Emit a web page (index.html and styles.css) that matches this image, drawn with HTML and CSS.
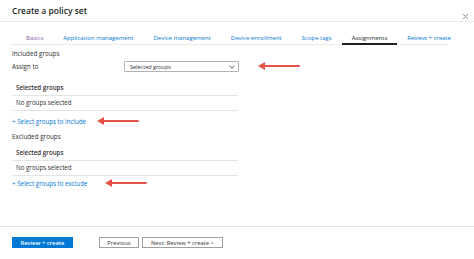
FILE: index.html
```html
<!DOCTYPE html>
<html lang="en">

<head>
    <meta charset="UTF-8">
    <meta name="viewport" content="width=device-width, initial-scale=1.0">
    <title>Create a policy set</title>
    <link rel="stylesheet" href="styles.css">
</head>

<body>

    <div class="page">
        <div class="header">
            <div class="header-title">Create a policy set</div>
            <svg class="close-icon" width="7" height="7" viewBox="0 0 7 7">
                <path d="M1 1 L6 6 M6 1 L1 6" stroke="#8a8886" stroke-width="0.9" fill="none"/>
            </svg>
        </div>

        <div class="main">
            <div class="tabs">
                <a class="tab tab-visited">Basics</a>
                <a class="tab">Application management</a>
                <a class="tab">Device management</a>
                <a class="tab">Device enrollment</a>
                <a class="tab">Scope tags</a>
                <a class="tab tab-active">Assignments</a>
                <a class="tab">Review + create</a>
            </div>

            <div class="section-label">Included groups</div>
            <div class="assign-row">
                <div class="assign-label">Assign to</div>
                <div class="dropdown">
                    <span>Selected groups</span>
                    <svg width="6" height="4" viewBox="0 0 6 4">
                        <path d="M0.5 0.8 L3 3.2 L5.5 0.8" stroke="#323130" stroke-width="0.8" fill="none"/>
                    </svg>
                </div>
            </div>

            <div class="group-table group-table-first">
                <div class="group-row group-head">Selected groups</div>
                <div class="group-row">No groups selected</div>
            </div>
            <a class="add-link add-link-first">+ Select groups to include</a>

            <div class="section-label section-label-second">Excluded groups</div>
            <div class="group-table">
                <div class="group-row group-head">Selected groups</div>
                <div class="group-row">No groups selected</div>
            </div>
            <a class="add-link add-link-second">+ Select groups to exclude</a>
        </div>

        <div class="footer">
            <button class="btn btn-primary">Review + create</button>
            <button class="btn btn-outline btn-prev">Previous</button>
            <button class="btn btn-outline">Next: Review + create &gt;</button>
        </div>

        <!-- red annotation arrows -->
        <div class="arrow arrow-assign"></div>
        <div class="arrow arrow-include"></div>
        <div class="arrow arrow-exclude"></div>
    </div>

</body>

</html>
```

FILE: styles.css
```css
* {
    margin: 0;
    padding: 0;
    box-sizing: border-box;
}

body {
    font-family: "Open Sans", "Liberation Sans", sans-serif;
    background-color: #ffffff;
    color: #323130;
}

.page {
    position: relative;
    width: 474px;
    height: 259px;
    display: flex;
    flex-direction: column;
}

.header {
    height: 22px;
    display: flex;
    justify-content: space-between;
    align-items: center;
    padding: 0 5px 1px 12px;
    border-bottom: 1px solid #e8e8e8;
}

.header-title {
    font-size: 8.5px;
    font-weight: 600;
    color: #201f1e;
}

.close-icon {
    margin-top: 12px;
}

.main {
    flex: 1;
    padding: 0 12px;
}

.tabs {
    display: flex;
    margin: 11px 14px 0 -1px;
    padding-left: 5px;
    border-bottom: 1px solid #ebebeb;
}

.tab {
    font-size: 6px;
    line-height: 10px;
    color: #0078d4;
    padding: 0 10px;
    border-bottom: 2px solid transparent;
    margin-bottom: -1px;
    white-space: nowrap;
}

.tab-visited {
    color: #8a5aa0;
}

.tab-active {
    color: #201f1e;
    border-bottom-color: #201f1e;
}

.section-label {
    font-size: 6.3px;
    line-height: 10px;
    margin-top: 4px;
}

.section-label-second {
    margin-top: 5px;
}

.assign-row {
    display: flex;
    align-items: center;
    margin-top: 2px;
    font-size: 6.3px;
}

.assign-label {
    width: 112px;
}

.dropdown {
    width: 115px;
    height: 11px;
    display: flex;
    justify-content: space-between;
    align-items: center;
    padding: 0 3px 0 5px;
    border: 1px solid #b4b4b4;
    border-radius: 1px;
    font-size: 5.5px;
}

.group-table {
    width: 226px;
    margin-top: 4px;
}

.group-table-first {
    margin-top: 9px;
}

.group-row {
    height: 15px;
    line-height: 14px;
    padding-left: 4px;
    font-size: 6.2px;
    border-bottom: 1px solid #e4e4e4;
}

.group-head {
    font-weight: 600;
}

.add-link {
    display: block;
    font-size: 6.2px;
    line-height: 10px;
    color: #0078d4;
}

.add-link-first {
    margin-top: 6px;
}

.add-link-second {
    margin-top: 3px;
}

.footer {
    height: 33px;
    display: flex;
    align-items: flex-start;
    padding: 10px 12px 0;
    border-top: 1px solid #e1e1e1;
}

.btn {
    height: 11px;
    font-family: "Open Sans", "Liberation Sans", sans-serif;
    font-size: 5.8px;
    cursor: pointer;
}

.btn-primary {
    width: 61px;
    background-color: #0078d4;
    color: #ffffff;
    font-weight: 600;
    border: none;
    margin-right: 26px;
}

.btn-outline {
    background-color: #ffffff;
    color: #323130;
    border: 1px solid #a19f9d;
    padding: 0 8px;
}

.btn-prev {
    width: 40px;
    margin-right: 3px;
    padding: 0;
}

/* annotation arrows drawn over the form */
.arrow {
    position: absolute;
    height: 2px;
    width: 40px;
    background-color: #e4534a;
    border-radius: 1px;
}

.arrow::before {
    content: "";
    position: absolute;
    left: -2px;
    top: -3px;
    border-top: 4px solid transparent;
    border-bottom: 4px solid transparent;
    border-right: 7px solid #e4534a;
}

.arrow-assign {
    left: 260px;
    top: 65px;
}

.arrow-include {
    left: 99px;
    top: 120px;
}

.arrow-exclude {
    left: 107px;
    top: 182px;
}
```
